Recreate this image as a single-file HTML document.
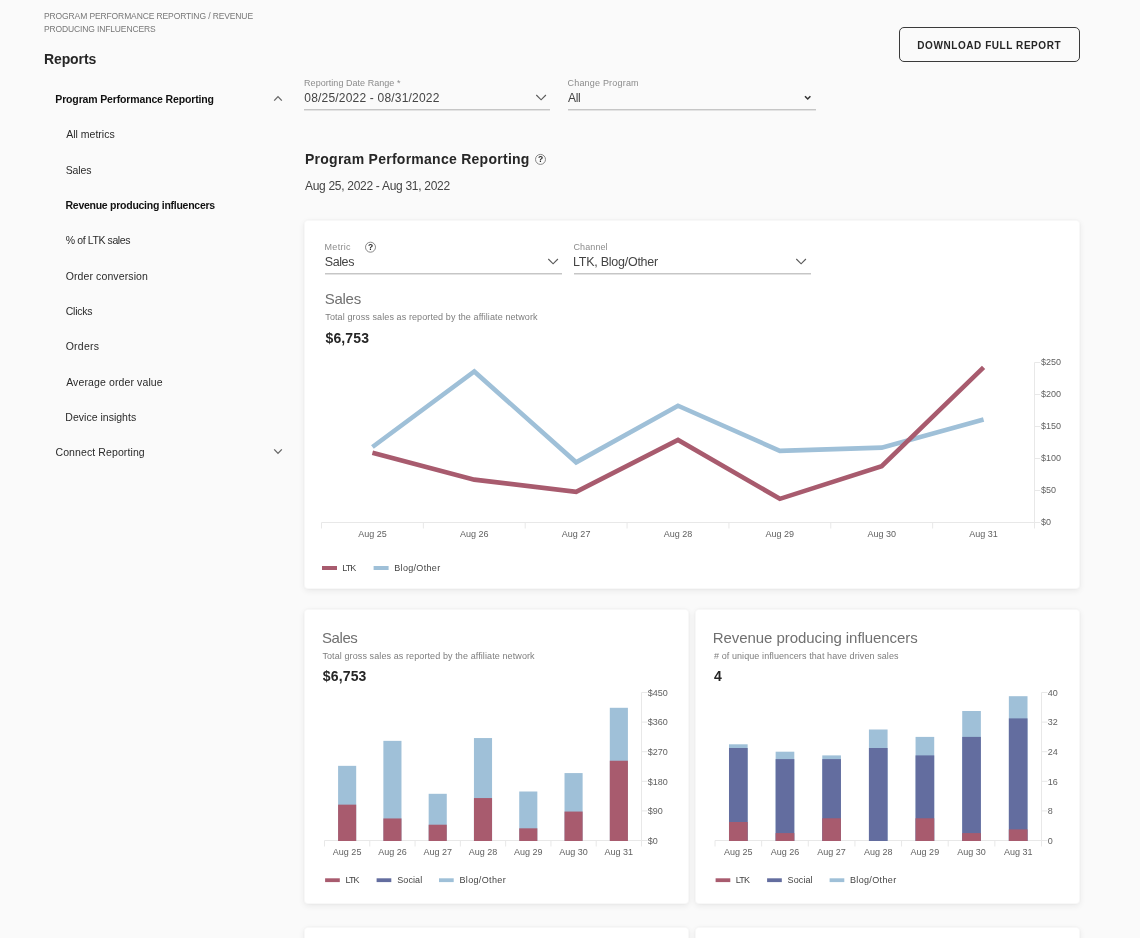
<!DOCTYPE html>
<html lang="en">
<head>
<meta charset="utf-8">
<title>Program Performance Reporting</title>
<style>
*{box-sizing:border-box;margin:0;padding:0}
html,body{width:1140px;height:938px;overflow:hidden;background:#fafafa}
body{font-family:"Liberation Sans",sans-serif;color:#222;-webkit-font-smoothing:antialiased}
#app{position:relative;width:1140px;height:938px;overflow:hidden;background:#fafafa;will-change:transform}
#app span,#app h1,#app h2,#app h3,#app p,#app a,#app label,#app strong,#app li{position:absolute;white-space:nowrap;font-weight:400;list-style:none;text-decoration:none}
ul,nav,aside,main,header{display:block}
.card{position:absolute;background:#fff;border-radius:3px;box-shadow:0 0 0 1px #f8f8f8,0 0 0 2px rgba(0,0,0,.01),0 2px 6px 1px rgba(0,0,0,.07)}
.btn{position:absolute;left:899px;top:27px;width:181px;height:35px;border:1px solid #3a3a3a;border-radius:5px;background:transparent;font-family:inherit}
.ul{position:absolute;height:2px;background:linear-gradient(#c6c6c6 50%,#e3e3e3 50%)}
svg{position:absolute;overflow:visible}
svg text{font-family:"Liberation Sans",sans-serif;font-size:9px;fill:#616161}
.ico{position:absolute}
</style>
</head>
<body>
<div id="app">
<aside>
<p class="crumbs">
<span style="left:44.00px;top:11px;font-size:8.5px;line-height:11px;color:#777;letter-spacing:-0.112px;">PROGRAM PERFORMANCE REPORTING / REVENUE</span>
<span style="left:44.00px;top:24px;font-size:8.5px;line-height:11px;color:#777;letter-spacing:-0.135px;">PRODUCING INFLUENCERS</span>
</p>
<h2 style="left:43.96px;top:50px;font-size:14px;line-height:18px;color:#262626;font-weight:700;letter-spacing:-0.099px;">Reports</h2>
<nav><ul>
<li style="left:55.30px;top:93px;font-size:10.5px;line-height:13px;color:#111;font-weight:700;letter-spacing:-0.146px;">Program Performance Reporting</li>
<li style="left:66.18px;top:128px;font-size:10.5px;line-height:13px;color:#2a2a2a;letter-spacing:0.008px;">All metrics</li>
<li style="left:65.72px;top:164px;font-size:10.5px;line-height:13px;color:#2a2a2a;letter-spacing:-0.127px;">Sales</li>
<li style="left:65.50px;top:199px;font-size:10.5px;line-height:13px;color:#111;font-weight:700;letter-spacing:-0.261px;">Revenue producing influencers</li>
<li style="left:65.83px;top:234px;font-size:10.5px;line-height:13px;color:#2a2a2a;letter-spacing:-0.400px;">% of LTK sales</li>
<li style="left:65.70px;top:270px;font-size:10.5px;line-height:13px;color:#2a2a2a;letter-spacing:0.109px;">Order conversion</li>
<li style="left:65.67px;top:305px;font-size:10.5px;line-height:13px;color:#2a2a2a;letter-spacing:-0.217px;">Clicks</li>
<li style="left:65.70px;top:340px;font-size:10.5px;line-height:13px;color:#2a2a2a;letter-spacing:0.237px;">Orders</li>
<li style="left:66.18px;top:376px;font-size:10.5px;line-height:13px;color:#2a2a2a;letter-spacing:0.117px;">Average order value</li>
<li style="left:65.34px;top:411px;font-size:10.5px;line-height:13px;color:#2a2a2a;letter-spacing:0.015px;">Device insights</li>
<li style="left:55.47px;top:446px;font-size:10.5px;line-height:13px;color:#2a2a2a;letter-spacing:0.103px;">Connect Reporting</li>
</ul></nav>
<svg class="ico" style="left:272px;top:93px" width="12" height="12" viewBox="0 0 12 12"><path d="M2.2 7.6 L6 3.6 L9.8 7.6" fill="none" stroke="#666" stroke-width="1.3"/></svg>
<svg class="ico" style="left:272px;top:446px" width="12" height="12" viewBox="0 0 12 12"><path d="M2.2 3.4 L6 7.4 L9.8 3.4" fill="none" stroke="#666" stroke-width="1.3"/></svg>
</aside>
<main>
<button class="btn" type="button"><span style="left:17.33px;top:12px;font-size:10px;line-height:12px;color:#262626;font-weight:700;letter-spacing:0.562px;">DOWNLOAD FULL REPORT</span></button>
<label style="left:304.06px;top:78px;font-size:9px;line-height:11px;color:#8c8c8c;letter-spacing:0.039px;">Reporting Date Range *</label>
<span style="left:304.33px;top:91px;font-size:12px;line-height:15px;color:#444;letter-spacing:0.195px;">08/25/2022 - 08/31/2022</span>
<svg class="ico" style="left:535px;top:91px" width="13" height="13" viewBox="0 0 13 13"><path d="M1.3 4 L6.1 8.8 L10.9 4" fill="none" stroke="#5a5a5a" stroke-width="1.15"/></svg>
<div class="ul" style="left:304px;top:109px;width:246px"></div>
<label style="left:567.54px;top:78px;font-size:9px;line-height:11px;color:#8c8c8c;letter-spacing:0.193px;">Change Program</label>
<span style="left:567.98px;top:91px;font-size:12px;line-height:15px;color:#444;letter-spacing:-0.259px;">All</span>
<svg class="ico" style="left:802px;top:92px" width="12" height="12" viewBox="0 0 12 12"><path d="M3 4.2 L5.7 7 L8.4 4.2" fill="none" stroke="#333" stroke-width="1.5"/></svg>
<div class="ul" style="left:568px;top:109px;width:248px"></div>
<h1 style="left:304.96px;top:150px;font-size:14px;line-height:18px;color:#262626;font-weight:700;letter-spacing:0.265px;">Program Performance Reporting</h1>
<svg class="ico" style="left:532px;top:151px" width="16" height="16" viewBox="0 0 16 16" role="img" aria-label="help"><circle cx="8.50" cy="8.40" r="5" fill="none" stroke="#7a7a7a" stroke-width="0.9"/><text x="8.50" y="11.45" text-anchor="middle" style="font-size:8.5px;font-weight:700;fill:#2a2a2a">?</text></svg>
<p style="left:304.98px;top:179px;font-size:12px;line-height:15px;color:#444;letter-spacing:-0.295px;">Aug 25, 2022 - Aug 31, 2022</p>
<section class="card" style="left:305px;top:221px;width:774px;height:367px">
<label style="left:19.56px;top:21px;font-size:9px;line-height:11px;color:#8c8c8c;letter-spacing:0.295px;">Metric</label>
<svg class="ico" style="left:57px;top:18px" width="16" height="16" viewBox="0 0 16 16" role="img" aria-label="help"><circle cx="8.50" cy="8.20" r="5" fill="none" stroke="#7a7a7a" stroke-width="0.9"/><text x="8.50" y="11.25" text-anchor="middle" style="font-size:8.5px;font-weight:700;fill:#2a2a2a">?</text></svg>
<span style="left:19.73px;top:33px;font-size:12.5px;line-height:16px;color:#444;letter-spacing:-0.400px;">Sales</span>
<svg class="ico" style="left:242px;top:34px" width="13" height="13" viewBox="0 0 13 13"><path d="M1.3 4 L6.1 8.8 L10.9 4" fill="none" stroke="#5a5a5a" stroke-width="1.15"/></svg>
<div class="ul" style="left:20px;top:52px;width:237px"></div>
<label style="left:268.54px;top:21px;font-size:9px;line-height:11px;color:#8c8c8c;letter-spacing:0.088px;">Channel</label>
<span style="left:267.97px;top:33px;font-size:12.5px;line-height:16px;color:#444;letter-spacing:-0.248px;">LTK, Blog/Other</span>
<svg class="ico" style="left:490px;top:34px" width="13" height="13" viewBox="0 0 13 13"><path d="M1.3 4 L6.1 8.8 L10.9 4" fill="none" stroke="#5a5a5a" stroke-width="1.15"/></svg>
<div class="ul" style="left:269px;top:52px;width:237px"></div>
<h3 style="left:19.82px;top:68px;font-size:15px;line-height:19px;color:#707070;letter-spacing:-0.302px;">Sales</h3>
<p style="left:20.30px;top:91px;font-size:9px;line-height:11px;color:#7d7d7d;letter-spacing:0.099px;">Total gross sales as reported by the affiliate network</p>
<strong style="left:20.52px;top:108px;font-size:14px;line-height:18px;color:#262626;font-weight:700;letter-spacing:0.132px;">$6,753</strong>
<svg width="774" height="367" viewBox="305 221 774 367" style="left:0;top:0"><path d="M321.5 522.5H1034.5M1034.5 362.5V528.5" fill="none" stroke="#e8e8e8" stroke-width="1"/><path d="M321.50 522.5v6M423.36 522.5v6M525.21 522.5v6M627.07 522.5v6M728.93 522.5v6M830.79 522.5v6M932.64 522.5v6M1034.5 522.50h6M1034.5 490.50h6M1034.5 458.50h6M1034.5 426.50h6M1034.5 394.50h6M1034.5 362.50h6" fill="none" stroke="#e8e8e8" stroke-width="1"/><text x="372.43" y="537" text-anchor="middle">Aug 25</text><text x="474.29" y="537" text-anchor="middle">Aug 26</text><text x="576.14" y="537" text-anchor="middle">Aug 27</text><text x="678.00" y="537" text-anchor="middle">Aug 28</text><text x="779.86" y="537" text-anchor="middle">Aug 29</text><text x="881.71" y="537" text-anchor="middle">Aug 30</text><text x="983.57" y="537" text-anchor="middle">Aug 31</text><text x="1041" y="525.10">$0</text><text x="1041" y="493.10">$50</text><text x="1041" y="461.10">$100</text><text x="1041" y="429.10">$150</text><text x="1041" y="397.10">$200</text><text x="1041" y="365.10">$250</text><polyline points="372.43,446.98 474.29,371.46 576.14,462.34 678.00,405.70 779.86,450.82 881.71,447.62 983.57,419.46" fill="none" stroke="#9fc0d8" stroke-width="4.6" stroke-linejoin="miter"/><polyline points="372.43,452.74 474.29,479.62 576.14,491.78 678.00,439.94 779.86,498.82 881.71,466.18 983.57,367.30" fill="none" stroke="#a85b6e" stroke-width="4.6" stroke-linejoin="miter"/><rect x="322" y="566" width="15" height="4" fill="#a85b6e"/><rect x="373.6" y="566" width="15" height="4" fill="#9fc0d8"/></svg>
<span style="left:37.26px;top:342px;font-size:9px;line-height:11px;color:#444;letter-spacing:-0.900px;">LTK</span>
<span style="left:89.26px;top:342px;font-size:9px;line-height:11px;color:#444;letter-spacing:0.317px;">Blog/Other</span>
</section>
<section class="card" style="left:305px;top:610px;width:383px;height:293px">
<h3 style="left:16.92px;top:18px;font-size:15px;line-height:19px;color:#707070;letter-spacing:-0.400px;">Sales</h3>
<p style="left:17.40px;top:41px;font-size:9px;line-height:11px;color:#7d7d7d;letter-spacing:0.099px;">Total gross sales as reported by the affiliate network</p>
<strong style="left:17.72px;top:57px;font-size:14px;line-height:18px;color:#262626;font-weight:700;letter-spacing:0.172px;">$6,753</strong>
<svg width="383" height="293" viewBox="305 610 383 293" style="left:0;top:0"><path d="M324.5 840.5H641.5M641.5 692.5V846.5" fill="none" stroke="#e8e8e8" stroke-width="1"/><path d="M324.50 840.5v6M369.79 840.5v6M415.07 840.5v6M460.36 840.5v6M505.64 840.5v6M550.93 840.5v6M596.21 840.5v6M641.5 840.50h6M641.5 810.90h6M641.5 781.30h6M641.5 751.70h6M641.5 722.10h6M641.5 692.50h6" fill="none" stroke="#e8e8e8" stroke-width="1"/><rect x="338.09" y="765.84" width="18.11" height="75.16" fill="#9fc0d8"/><rect x="338.09" y="804.65" width="18.11" height="36.35" fill="#a85b6e"/><rect x="383.37" y="740.85" width="18.11" height="100.15" fill="#9fc0d8"/><rect x="383.37" y="818.46" width="18.11" height="22.54" fill="#a85b6e"/><rect x="428.66" y="793.80" width="18.11" height="47.20" fill="#9fc0d8"/><rect x="428.66" y="824.71" width="18.11" height="16.29" fill="#a85b6e"/><rect x="473.94" y="738.05" width="18.11" height="102.95" fill="#9fc0d8"/><rect x="473.94" y="798.07" width="18.11" height="42.93" fill="#a85b6e"/><rect x="519.23" y="791.50" width="18.11" height="49.50" fill="#9fc0d8"/><rect x="519.23" y="828.33" width="18.11" height="12.67" fill="#a85b6e"/><rect x="564.51" y="773.08" width="18.11" height="67.92" fill="#9fc0d8"/><rect x="564.51" y="811.56" width="18.11" height="29.44" fill="#a85b6e"/><rect x="609.80" y="707.79" width="18.11" height="133.21" fill="#9fc0d8"/><rect x="609.80" y="760.74" width="18.11" height="80.26" fill="#a85b6e"/><text x="347.14" y="855.4" text-anchor="middle">Aug 25</text><text x="392.43" y="855.4" text-anchor="middle">Aug 26</text><text x="437.71" y="855.4" text-anchor="middle">Aug 27</text><text x="483.00" y="855.4" text-anchor="middle">Aug 28</text><text x="528.29" y="855.4" text-anchor="middle">Aug 29</text><text x="573.57" y="855.4" text-anchor="middle">Aug 30</text><text x="618.86" y="855.4" text-anchor="middle">Aug 31</text><text x="647.8" y="843.80">$0</text><text x="647.8" y="814.20">$90</text><text x="647.8" y="784.60">$180</text><text x="647.8" y="755.00">$270</text><text x="647.8" y="725.40">$360</text><text x="647.8" y="695.80">$450</text><rect x="325.1" y="878.3" width="14.7" height="3.8" fill="#a85b6e"/><rect x="376.6" y="878.3" width="14.7" height="3.8" fill="#636d9f"/><rect x="439" y="878.3" width="14.7" height="3.8" fill="#9fc0d8"/></svg>
<span style="left:40.46px;top:265px;font-size:9px;line-height:11px;color:#444;letter-spacing:-0.900px;">LTK</span>
<span style="left:92.19px;top:265px;font-size:9px;line-height:11px;color:#444;letter-spacing:0.099px;">Social</span>
<span style="left:154.46px;top:265px;font-size:9px;line-height:11px;color:#444;letter-spacing:0.351px;">Blog/Other</span>
</section>
<section class="card" style="left:696px;top:610px;width:383px;height:293px">
<h3 style="left:16.77px;top:18px;font-size:15px;line-height:19px;color:#707070;letter-spacing:-0.066px;">Revenue producing influencers</h3>
<p style="left:17.96px;top:41px;font-size:9px;line-height:11px;color:#7d7d7d;letter-spacing:0.088px;"># of unique influencers that have driven sales</p>
<strong style="left:18.09px;top:57px;font-size:14px;line-height:18px;color:#262626;font-weight:700;">4</strong>
<svg width="383" height="293" viewBox="696 610 383 293" style="left:0;top:0"><path d="M715 840.5H1041.5M1041.5 692.5V846.5" fill="none" stroke="#e8e8e8" stroke-width="1"/><path d="M715.00 840.5v6M761.64 840.5v6M808.29 840.5v6M854.93 840.5v6M901.57 840.5v6M948.21 840.5v6M994.86 840.5v6M1041.5 840.50h6M1041.5 810.90h6M1041.5 781.30h6M1041.5 751.70h6M1041.5 722.10h6M1041.5 692.50h6" fill="none" stroke="#e8e8e8" stroke-width="1"/><rect x="728.99" y="744.30" width="18.66" height="96.70" fill="#9fc0d8"/><rect x="728.99" y="748.00" width="18.66" height="93.00" fill="#636d9f"/><rect x="728.99" y="822.00" width="18.66" height="19.00" fill="#a85b6e"/><rect x="775.64" y="751.70" width="18.66" height="89.30" fill="#9fc0d8"/><rect x="775.64" y="759.10" width="18.66" height="81.90" fill="#636d9f"/><rect x="775.64" y="833.10" width="18.66" height="7.90" fill="#a85b6e"/><rect x="822.28" y="755.40" width="18.66" height="85.60" fill="#9fc0d8"/><rect x="822.28" y="759.10" width="18.66" height="81.90" fill="#636d9f"/><rect x="822.28" y="818.30" width="18.66" height="22.70" fill="#a85b6e"/><rect x="868.92" y="729.50" width="18.66" height="111.50" fill="#9fc0d8"/><rect x="868.92" y="748.00" width="18.66" height="93.00" fill="#636d9f"/><rect x="915.56" y="736.90" width="18.66" height="104.10" fill="#9fc0d8"/><rect x="915.56" y="755.40" width="18.66" height="85.60" fill="#636d9f"/><rect x="915.56" y="818.30" width="18.66" height="22.70" fill="#a85b6e"/><rect x="962.21" y="711.00" width="18.66" height="130.00" fill="#9fc0d8"/><rect x="962.21" y="736.90" width="18.66" height="104.10" fill="#636d9f"/><rect x="962.21" y="833.10" width="18.66" height="7.90" fill="#a85b6e"/><rect x="1008.85" y="696.20" width="18.66" height="144.80" fill="#9fc0d8"/><rect x="1008.85" y="718.40" width="18.66" height="122.60" fill="#636d9f"/><rect x="1008.85" y="829.40" width="18.66" height="11.60" fill="#a85b6e"/><text x="738.32" y="855.4" text-anchor="middle">Aug 25</text><text x="784.96" y="855.4" text-anchor="middle">Aug 26</text><text x="831.61" y="855.4" text-anchor="middle">Aug 27</text><text x="878.25" y="855.4" text-anchor="middle">Aug 28</text><text x="924.89" y="855.4" text-anchor="middle">Aug 29</text><text x="971.54" y="855.4" text-anchor="middle">Aug 30</text><text x="1018.18" y="855.4" text-anchor="middle">Aug 31</text><text x="1047.8" y="843.80">0</text><text x="1047.8" y="814.20">8</text><text x="1047.8" y="784.60">16</text><text x="1047.8" y="755.00">24</text><text x="1047.8" y="725.40">32</text><text x="1047.8" y="695.80">40</text><rect x="715.6" y="878.3" width="14.7" height="3.8" fill="#a85b6e"/><rect x="767.1" y="878.3" width="14.7" height="3.8" fill="#636d9f"/><rect x="829.6" y="878.3" width="14.7" height="3.8" fill="#9fc0d8"/></svg>
<span style="left:39.86px;top:265px;font-size:9px;line-height:11px;color:#444;letter-spacing:-0.900px;">LTK</span>
<span style="left:91.59px;top:265px;font-size:9px;line-height:11px;color:#444;letter-spacing:0.099px;">Social</span>
<span style="left:153.96px;top:265px;font-size:9px;line-height:11px;color:#444;letter-spacing:0.351px;">Blog/Other</span>
</section>
<section class="card" style="left:305px;top:928px;width:383px;height:200px"></section>
<section class="card" style="left:696px;top:928px;width:383px;height:200px"></section>
</main>
</div>
</body>
</html>
